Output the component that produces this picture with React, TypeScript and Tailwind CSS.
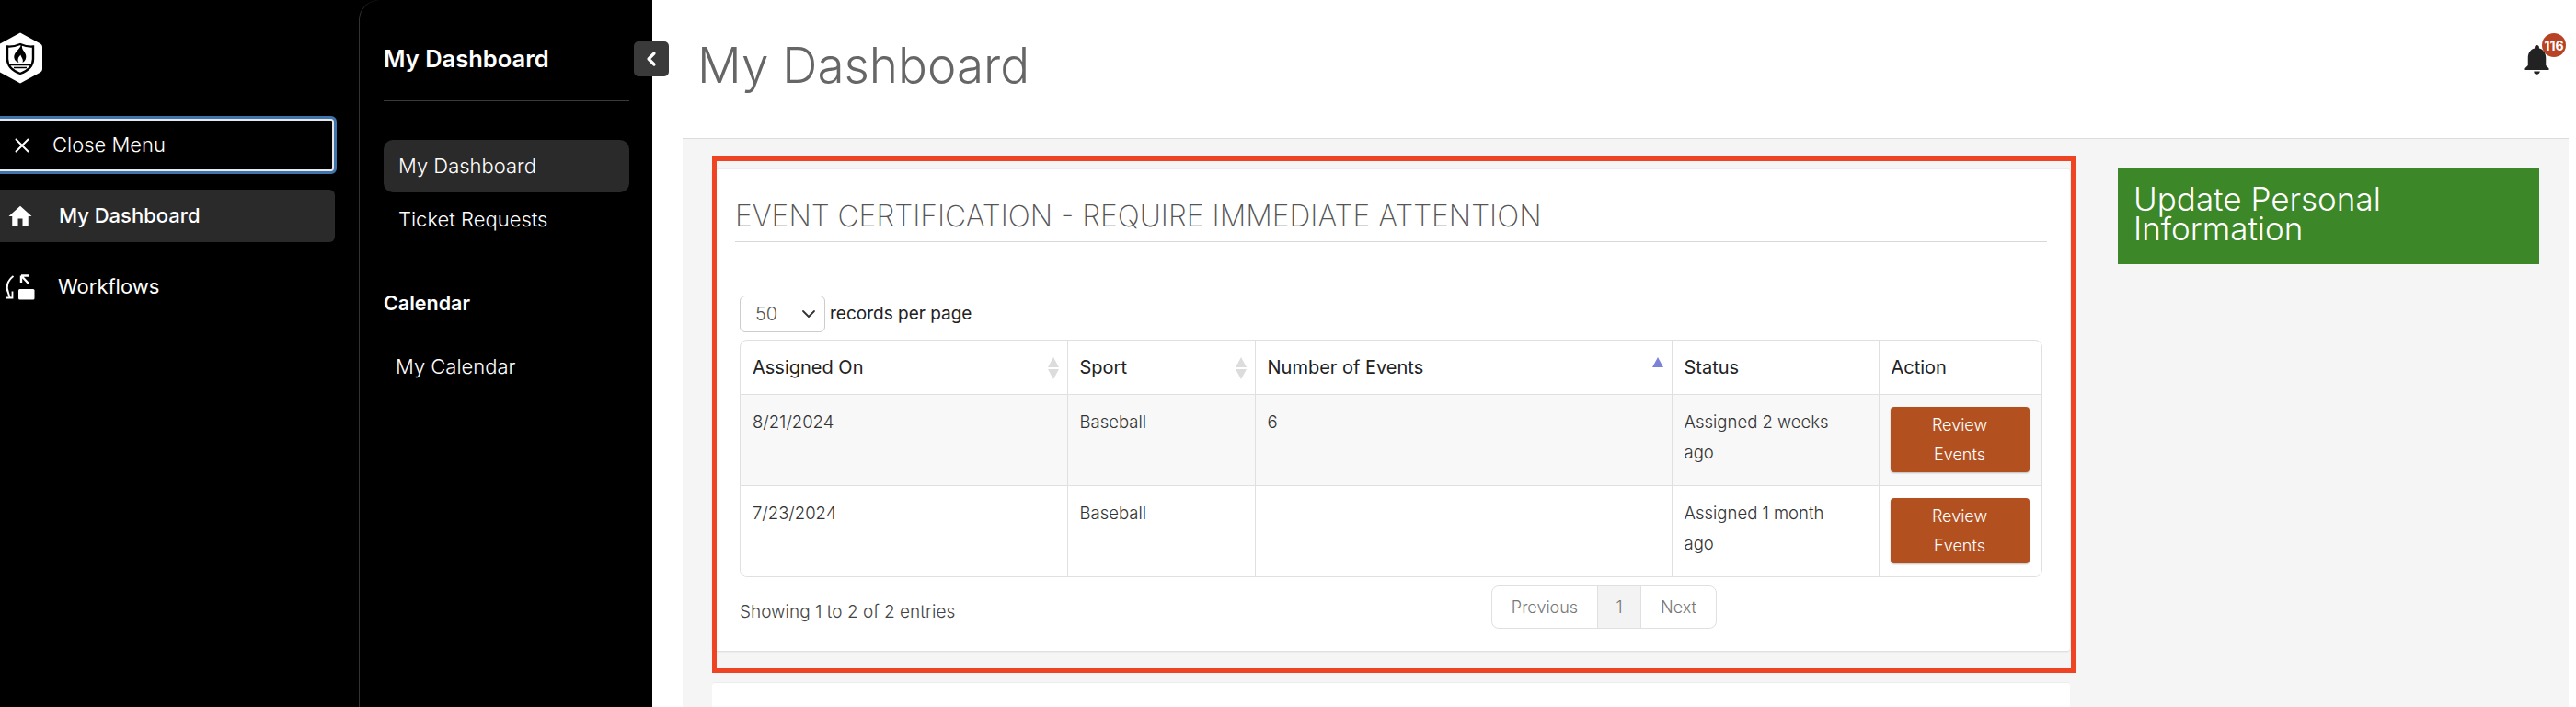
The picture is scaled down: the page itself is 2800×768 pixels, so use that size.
import { ChevronDown, ChevronLeft, X } from 'lucide-react'
import { MdHome, MdNotifications } from 'react-icons/md'

const rows = [
  { date: '8/21/2024', sport: 'Baseball', events: '6', status: 'Assigned 2 weeks ago' },
  { date: '7/23/2024', sport: 'Baseball', events: '', status: 'Assigned 1 month ago' },
]

function Logo() {
  return (
    <svg viewBox="0 0 50 58" className="-ml-[3px] h-[58px] w-[50px]">
      <path
        d="M25 1.5 47 13.5Q49 14.7 49 17V41Q49 43.3 47 44.5L25 56.5L3 44.5Q1 43.3 1 41V17Q1 14.7 3 13.5Z"
        fill="#fff"
      />
      <path
        d="M25 14C30 16 34 17 39 16.5V30C39 38 33 43 25 46C17 43 11 38 11 30V16.5C16 17 20 16 25 14Z"
        fill="none"
        stroke="#000"
        strokeWidth="2.4"
      />
      <path
        d="M25.5 13C27 18 20 21 18.5 26C17.5 30 20 33 23.5 34C21.5 30.5 23 28 25.5 25.5C25.5 28 29 30 27.5 34C30.5 32.5 32 29 31 25.5C30 22 26 19.5 27 15Z"
        fill="#000"
      />
      <path d="M14 36.5H36M18 39.5H32" stroke="#000" strokeWidth="1.6" />
    </svg>
  )
}

function WorkflowIcon() {
  return (
    <svg viewBox="0 0 34 28" className="h-[28px] w-[34px]" fill="none">
      <path d="M9.5 2C3 7 1 14 4 20L5.5 25" stroke="#fff" strokeWidth="2" />
      <path d="M1 25.5H8.5V18.5" stroke="#fff" strokeWidth="1.8" />
      <rect x="15" y="16" width="17.5" height="11.5" rx="1.5" fill="#fff" />
      <path d="M18 1.5H26M18 1.5V9M18.5 2L26 10" stroke="#fff" strokeWidth="2.4" />
    </svg>
  )
}

function SortIcon({ active }: { active?: boolean }) {
  return (
    <span className="absolute top-[18px] right-[10px] flex w-[10px] flex-col items-center gap-[2px]">
      <span
        className={
          active
            ? 'h-0 w-0 border-x-[6px] border-b-[11px] border-x-transparent border-b-[#7b83d8]'
            : 'h-0 w-0 border-x-[6px] border-b-[11px] border-x-transparent border-b-[#dcdcdc]'
        }
      />
      {!active && (
        <span className="h-0 w-0 border-x-[6px] border-t-[11px] border-x-transparent border-t-[#dcdcdc]" />
      )}
    </span>
  )
}

function Header({ label, sort, active }: { label: string; sort?: boolean; active?: boolean }) {
  return (
    <th className="relative border-r border-[#e0e0e0] px-[13px] text-left text-[20px] font-normal text-[#222] last:border-r-0">
      {label}
      {sort && <SortIcon active={active} />}
    </th>
  )
}

export default function App() {
  return (
    <div className="flex h-screen w-[2800px] overflow-hidden bg-white font-['Inter',sans-serif]">
      <aside className="relative z-10 flex w-[709px] shrink-0 bg-black text-white">
        <div className="w-[390px] shrink-0 pt-[34px]">
          <Logo />
          <button className="mt-[34px] -ml-2 flex h-[63px] w-[374px] items-center rounded-md border-[3px] border-[#3f74ad] bg-black outline-none">
            <span className="flex h-full w-full items-center rounded-[3px] border-2 border-[#e8e8e8] pl-[14px]">
              <X size={26} strokeWidth={1.8} className="text-white" />
              <span className="ml-[20px] text-[22px] font-light">Close Menu</span>
            </span>
          </button>
          <div className="mt-[17px] flex h-[57px] w-[364px] items-center rounded-r-md bg-[#2a2a2a] pl-[7px]">
            <MdHome size={30} />
            <span className="ml-[27px] text-[22px] font-medium">My Dashboard</span>
          </div>
          <div className="mt-[20px] flex h-[57px] items-center pl-[5px]">
            <WorkflowIcon />
            <span className="ml-[24px] text-[22px] font-normal">Workflows</span>
          </div>
        </div>

        <div className="w-[319px] rounded-tl-[22px] border-l border-[#333] pt-[48px] pl-[26px]">
          <div className="w-[267px] border-b border-[#3a3a3a] pb-[30px]">
            <h2 className="text-[25.5px] leading-[31px] font-semibold">My Dashboard</h2>
          </div>
          <div className="mt-[42px] flex h-[57px] w-[267px] items-center rounded-[10px] bg-[#2a2a2a] pl-[16px] text-[22px] font-light">
            My Dashboard
          </div>
          <div className="flex h-[58px] items-center pl-[16px] text-[22px] font-light">Ticket Requests</div>
          <h3 className="mt-[48px] text-[21.5px] leading-[28px] font-semibold">Calendar</h3>
          <div className="mt-[41px] pl-[13px] text-[22px] leading-[28px] font-light">My Calendar</div>
        </div>

        <button className="absolute top-[45px] left-[689px] flex h-[38px] w-[38px] items-center justify-center rounded-[5px] bg-[#3a3a3a]">
          <ChevronLeft size={24} strokeWidth={3.2} className="text-white" />
        </button>
      </aside>

      <main className="flex w-[2083px] shrink-0 flex-col pl-[33px]">
        <header className="relative flex h-[151px] shrink-0 items-center border-b border-[#dcdcdc] bg-white pb-[6px] pl-[16px]">
          <h1 className="text-[53px] font-light text-[#666]">My Dashboard</h1>
          <div className="absolute top-[45px] left-[1996px]">
            <MdNotifications size={39} className="text-[#222]" />
            <span className="absolute -top-[9px] left-[25px] flex h-[26px] w-[26px] items-center justify-center rounded-full bg-[#b84225] text-[14px] font-bold text-white">
              116
            </span>
          </div>
        </header>

        <div className="flex flex-1 items-start gap-[52px] bg-[#f5f5f5] pt-[32px] pl-[32px]">
          <div className="w-[1476px]">
            <section className="relative rounded-[3px] border-t border-[#ececec] bg-white px-[25px] pt-[33px] pb-[24px] shadow-[0_1px_2px_rgba(0,0,0,0.12)]">
              <div className="border-b border-[#d8d8d8] pb-[9px]">
                <h2 className="text-[31.8px] leading-[36px] font-extralight text-[#555]">
                  EVENT CERTIFICATION - REQUIRE IMMEDIATE ATTENTION
                </h2>
              </div>

              <div className="mt-[58px] ml-[5px] flex items-center">
                <div className="flex h-[40px] w-[93px] items-center justify-between rounded-md border border-[#ccc] pr-[5px] pl-[16px] text-[20px] font-light text-[#555]">
                  50
                  <ChevronDown size={24} strokeWidth={1.8} className="text-[#333]" />
                </div>
                <span className="ml-[5px] text-[19px] text-[#222]">records per page</span>
              </div>

              <div className="mt-[8px] ml-[5px] w-[1416px] overflow-hidden rounded-lg border border-[#e0e0e0]">
                <table className="w-full table-fixed border-collapse">
                  <colgroup>
                    <col className="w-[355px]" />
                    <col className="w-[204px]" />
                    <col className="w-[453px]" />
                    <col className="w-[225px]" />
                    <col />
                  </colgroup>
                  <thead>
                    <tr className="h-[58px] border-b border-[#e0e0e0]">
                      <Header label="Assigned On" sort />
                      <Header label="Sport" sort />
                      <Header label="Number of Events" sort active />
                      <Header label="Status" />
                      <Header label="Action" />
                    </tr>
                  </thead>
                  <tbody className="text-[18.5px] leading-[33px] font-light text-[#333]">
                    {rows.map((row, i) => (
                      <tr
                        key={i}
                        className={
                          i === 0 ? 'h-[99px] border-b border-[#e0e0e0] bg-[#f8f8f8]' : 'h-[99px] bg-white'
                        }
                      >
                        <td className="border-r border-[#e0e0e0] px-[13px] pt-[13px] align-top">{row.date}</td>
                        <td className="border-r border-[#e0e0e0] px-[13px] pt-[13px] align-top">{row.sport}</td>
                        <td className="border-r border-[#e0e0e0] px-[13px] pt-[13px] align-top">{row.events}</td>
                        <td className="border-r border-[#e0e0e0] pt-[13px] pr-[36px] pl-[13px] align-top">{row.status}</td>
                        <td className="px-[12px] align-middle">
                          <button className="block h-[71px] w-[151px] rounded-[4px] bg-[#b35020] px-[20px] text-[18px] leading-[32px] font-light text-white shadow-[0_1px_2px_rgba(0,0,0,0.25)]">
                            Review Events
                          </button>
                        </td>
                      </tr>
                    ))}
                  </tbody>
                </table>
              </div>

              <div className="mt-[9px] ml-[5px] flex items-center">
                <span className="mt-[12px] w-[817px] text-[19px] font-light text-[#444]">Showing 1 to 2 of 2 entries</span>
                <div className="flex h-[47px] overflow-hidden rounded-lg border border-[#e0e0e0] text-[18px] font-light text-[#777]">
                  <span className="flex w-[115px] items-center justify-center border-r border-[#e0e0e0]">Previous</span>
                  <span className="flex w-[47px] items-center justify-center border-r border-[#e0e0e0] bg-[#f3f3f3]">1</span>
                  <span className="flex w-[81px] items-center justify-center">Next</span>
                </div>
              </div>

              <div className="pointer-events-none absolute -top-[14px] -right-[6px] -bottom-[24px] left-0 border-[5px] border-[#ef4423]" />
            </section>

            <section className="mt-[34px] h-[200px] rounded-[3px] border-t border-[#ececec] bg-white" />
          </div>

          <div className="h-[104px] w-[458px] bg-[#3c8728] px-[17px] pt-[17px] text-[35px] leading-[32px] font-light text-white">
            Update Personal
            <br />
            Information
          </div>
        </div>
      </main>
    </div>
  )
}
